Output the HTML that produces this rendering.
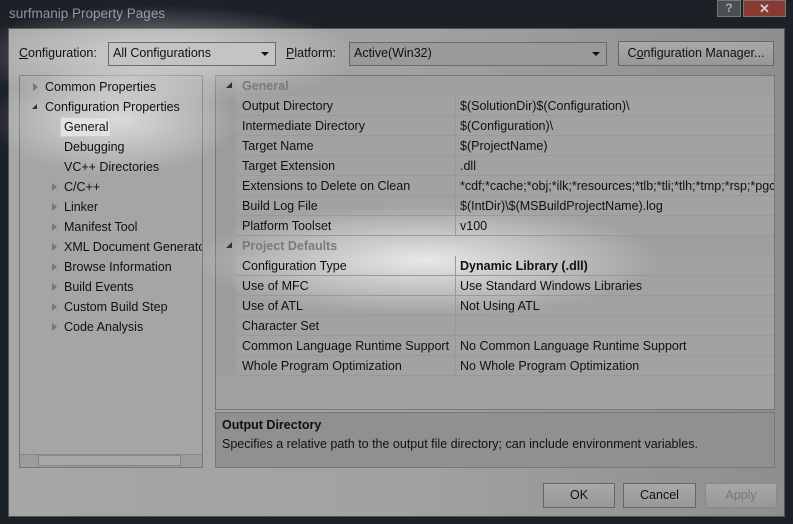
<!DOCTYPE html>
<html><head><style>
*{margin:0;padding:0;box-sizing:border-box}
body{width:793px;height:524px;background:#1c2027;position:relative;overflow:hidden;font-family:"Liberation Sans",sans-serif;font-size:12.5px;color:#111}
.abs{position:absolute}
#title{left:9px;top:6px;color:#8d949c;font-size:13.5px}
#client{left:8px;top:28px;width:777px;height:489px;background:linear-gradient(90deg,#a6a6a6 0%,#a2a2a2 50%,#8e8e8e 100%);border:1px solid #555}
.glow{position:absolute;border-radius:50%;pointer-events:none}
.btn{position:absolute;border:1px solid #666;background:linear-gradient(#a8a8a8,#989898);text-align:center;font-size:12.5px;line-height:22px}
.combo{position:absolute;border:1px solid #6a6a6a;background:#a8a8a8;padding-left:4px;line-height:21px}
.arrow{position:absolute;right:6px;top:9px;width:0;height:0;border-left:4px solid transparent;border-right:4px solid transparent;border-top:4px solid #111}
.tree div{position:absolute;white-space:nowrap}
.tri{position:absolute;width:0;height:0;border-top:4px solid transparent;border-bottom:4px solid transparent;border-left:5px solid #777}
.row{position:absolute;left:236px;width:538px;height:20px;border-bottom:1px solid #999;line-height:21px}
.row span{position:absolute;left:6px}
.row b{position:absolute;left:219px;top:0;height:20px;border-left:1px solid #999;padding-left:4px;font-weight:normal;white-space:nowrap;width:319px;overflow:hidden}
.cat{position:absolute;left:236px;width:538px;height:20px;line-height:21px;color:#7a7a7a;font-weight:bold;padding-left:6px}
</style></head><body>
<div class="abs" id="title">surfmanip Property Pages</div>
<div class="abs" style="left:717px;top:0;width:24px;height:17px;background:#4a4e55;border:1px solid #777;color:#aaa;text-align:center;font-weight:bold;font-size:12px">?</div>
<div class="abs" style="left:743px;top:0;width:43px;height:17px;background:#8a3a32;border:1px solid #777;color:#ccc;text-align:center;font-weight:bold;font-size:13px;line-height:15px">✕</div>
<div class="abs" id="client"></div>

<div class="abs" style="left:19px;top:75px;width:184px;height:393px;border:1px solid #777;background:#a5a5a5"></div>
<div class="abs" style="left:215px;top:75px;width:560px;height:335px;border:1px solid #777;background:#a2a2a2"></div>
<div class="abs" style="left:216px;top:76px;width:20px;height:300px;background:#9c9c9c"></div>
<div class="abs" style="left:236px;top:76px;width:538px;height:20px;background:#9f9f9f"></div>
<div class="abs" style="left:236px;top:236px;width:538px;height:20px;background:#9f9f9f"></div>
<div class="abs" style="left:215px;top:412px;width:560px;height:56px;border:1px solid #777;background:#909090"></div>

<div class="glow" style="left:-40px;top:5px;width:400px;height:100px;background:radial-gradient(closest-side,rgba(255,255,255,.5),rgba(255,255,255,0))"></div>
<div class="glow" style="left:-10px;top:65px;width:250px;height:110px;background:radial-gradient(closest-side,rgba(255,255,255,.6),rgba(255,255,255,0))"></div>
<div class="glow" style="left:190px;top:205px;width:470px;height:110px;background:radial-gradient(closest-side,rgba(255,255,255,.75),rgba(255,255,255,0))"></div>

<div class="abs" style="left:19px;top:46px;"><u>C</u>onfiguration:</div>
<div class="combo" style="left:108px;top:42px;width:168px;height:24px;background:#c4c4c4">All Configurations<div class="arrow"></div></div>
<div class="abs" style="left:286px;top:46px;"><u>P</u>latform:</div>
<div class="combo" style="left:349px;top:42px;width:258px;height:24px;background:#9a9a9a">Active(Win32)<div class="arrow"></div></div>
<div class="btn" style="left:618px;top:41px;width:156px;height:25px">C<u>o</u>nfiguration Manager...</div>

<div class="tree">
<div class="tri" style="left:33px;top:83px"></div><div style="left:45px;top:80px">Common Properties</div>
<div class="abs" style="left:32px;top:104px;border-left:5px solid transparent;border-bottom:5px solid #333"></div><div style="left:45px;top:100px">Configuration Properties</div>
<div style="left:60px;top:117px;width:51px;height:20px;border:1px solid #ccc;background:#e2e2e2"></div><div style="left:64px;top:120px">General</div>
<div style="left:64px;top:140px">Debugging</div>
<div style="left:64px;top:160px">VC++ Directories</div>
<div class="tri" style="left:52px;top:183px"></div><div style="left:64px;top:180px">C/C++</div>
<div class="tri" style="left:52px;top:203px"></div><div style="left:64px;top:200px">Linker</div>
<div class="tri" style="left:52px;top:223px"></div><div style="left:64px;top:220px">Manifest Tool</div>
<div class="tri" style="left:52px;top:243px"></div><div style="left:64px;top:240px;width:138px;overflow:hidden">XML Document Generator</div>
<div class="tri" style="left:52px;top:263px"></div><div style="left:64px;top:260px">Browse Information</div>
<div class="tri" style="left:52px;top:283px"></div><div style="left:64px;top:280px">Build Events</div>
<div class="tri" style="left:52px;top:303px"></div><div style="left:64px;top:300px">Custom Build Step</div>
<div class="tri" style="left:52px;top:323px"></div><div style="left:64px;top:320px">Code Analysis</div>
</div>
<div class="abs" style="left:20px;top:454px;width:182px;height:13px;background:#9c9c9c;border-top:1px solid #888"></div>
<div class="abs" style="left:38px;top:455px;width:143px;height:11px;background:#a8a8a8;border:1px solid #888"></div>

<div class="abs" style="left:226px;top:82px;border-left:6px solid transparent;border-bottom:6px solid #333"></div>
<div class="cat" style="top:76px">General</div>
<div class="row" style="top:96px"><span>Output Directory</span><b>$(SolutionDir)$(Configuration)\</b></div>
<div class="row" style="top:116px"><span>Intermediate Directory</span><b>$(Configuration)\</b></div>
<div class="row" style="top:136px"><span>Target Name</span><b>$(ProjectName)</b></div>
<div class="row" style="top:156px"><span>Target Extension</span><b>.dll</b></div>
<div class="row" style="top:176px"><span>Extensions to Delete on Clean</span><b>*cdf;*cache;*obj;*ilk;*resources;*tlb;*tli;*tlh;*tmp;*rsp;*pgc</b></div>
<div class="row" style="top:196px"><span>Build Log File</span><b>$(IntDir)\$(MSBuildProjectName).log</b></div>
<div class="row" style="top:216px"><span>Platform Toolset</span><b>v100</b></div>
<div class="abs" style="left:226px;top:242px;border-left:6px solid transparent;border-bottom:6px solid #333"></div>
<div class="cat" style="top:236px">Project Defaults</div>
<div class="row" style="top:256px"><span>Configuration Type</span><b style="font-weight:bold">Dynamic Library (.dll)</b></div>
<div class="row" style="top:276px"><span>Use of MFC</span><b>Use Standard Windows Libraries</b></div>
<div class="row" style="top:296px"><span>Use of ATL</span><b>Not Using ATL</b></div>
<div class="row" style="top:316px"><span>Character Set</span><b></b></div>
<div class="row" style="top:336px"><span>Common Language Runtime Support</span><b>No Common Language Runtime Support</b></div>
<div class="row" style="top:356px"><span>Whole Program Optimization</span><b>No Whole Program Optimization</b></div>

<div class="abs" style="left:222px;top:418px;font-weight:bold">Output Directory</div>
<div class="abs" style="left:222px;top:437px">Specifies a relative path to the output file directory; can include environment variables.</div>

<div class="btn" style="left:543px;top:483px;width:72px;height:25px">OK</div>
<div class="btn" style="left:623px;top:483px;width:73px;height:25px">Cancel</div>
<div class="btn" style="left:705px;top:483px;width:72px;height:25px;color:#777;border-color:#888">Apply</div>
</body></html>
